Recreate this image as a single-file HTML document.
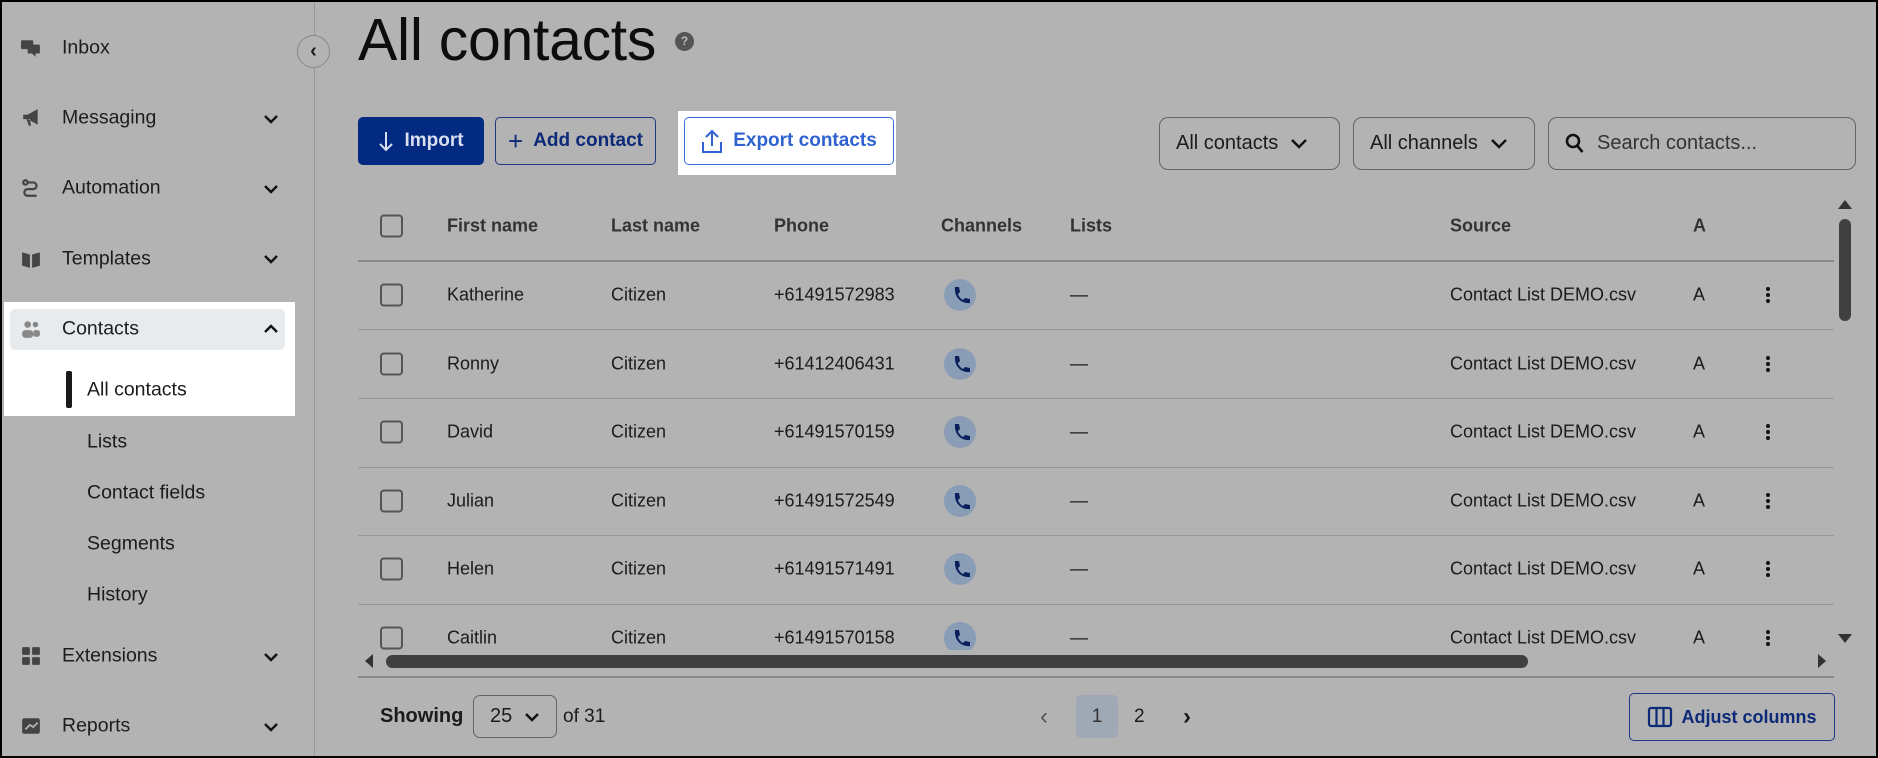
<!DOCTYPE html>
<html><head><meta charset="utf-8"><style>
*{margin:0;padding:0;box-sizing:border-box}
body{width:1878px;height:758px;background:#b3b3b3;font-family:"Liberation Sans",sans-serif;color:#1b1b1b;position:relative;overflow:hidden}
.a{position:absolute;white-space:nowrap}
.frame{position:absolute;left:0;top:0;width:1878px;height:758px;border:2px solid #000;pointer-events:none;z-index:10}
.nav{font-size:19.5px;color:#1d1d1d;transform:translateY(-50%)}
.ico{position:absolute;left:21px;width:20px;height:18px;transform:translateY(-50%)}
.chev{position:absolute;left:263px;transform:translateY(-50%)}
.sub{font-size:19.5px;left:87px;transform:translateY(-50%)}
.th{font-size:18px;font-weight:bold;color:#333;transform:translateY(-50%)}
.td{font-size:18px;color:#1b1b1b;transform:translateY(-50%)}
.cb{position:absolute;left:380px;width:23px;height:23px;border:2px solid #555;border-radius:4px;transform:translateY(-50%)}
.line{position:absolute;left:358px;width:1476px;height:1px;background:#999}
.ph{position:absolute;left:944px;width:32px;height:32px;border-radius:50%;background:#8a9db6;transform:translateY(-50%)}
.dots{position:absolute;left:1766px;width:4px;transform:translateY(-50%)}
.dots i{display:block;width:4px;height:4px;border-radius:50%;background:#111;margin:2px 0}
.btn{position:absolute;border-radius:5px;font-size:19px;font-weight:bold;display:flex;align-items:center;justify-content:center;gap:10px}
.flt{position:absolute;top:117px;height:53px;border:1.5px solid #5f666c;border-radius:9px;font-size:20px;display:flex;align-items:center;padding-left:16px;gap:12px}
</style></head><body>
<div class="frame"></div>
<div class="a" style="left:314px;top:0;width:1px;height:758px;background:#999"></div>
<div class="a" style="left:297px;top:35px;width:33px;height:33px;border-radius:50%;border:1px solid #888;background:#b3b3b3;text-align:center;line-height:30px;font-size:20px;font-weight:bold">‹</div>

<div class="a" style="left:4px;top:302px;width:291px;height:114px;background:#fff"></div>
<div class="a" style="left:10px;top:309px;width:275px;height:41px;background:#e8ebee;border-radius:5px"></div>
<div class="a" style="left:66px;top:371px;width:6px;height:37px;background:#1a1a1a;border-radius:2px"></div>

<svg class="ico" style="top:48px" viewBox="0 0 18 16"><rect x="0" y="1" width="11" height="8" rx="1" fill="#444"/><rect x="6" y="5" width="11" height="8" rx="1" fill="#444"/><path d="M13 13v3l-3-3z" fill="#444"/></svg>
<div class="a nav" style="left:62px;top:48px">Inbox</div>
<svg class="ico" style="top:118px" viewBox="0 0 18 16"><path d="M2 5h4l9-5v14l-9-5H2zM5 9l2 6h2l-1-6z" fill="#444"/></svg>
<div class="a nav" style="left:62px;top:118px">Messaging</div>
<svg class="ico" style="top:188px" viewBox="0 0 18 16" fill="none" stroke="#444" stroke-width="2"><circle cx="4" cy="3" r="2"/><path d="M6 3h5a3 3 0 010 6H6a3 3 0 000 6h8"/></svg>
<div class="a nav" style="left:62px;top:188px">Automation</div>
<svg class="ico" style="top:259px" viewBox="0 0 18 16"><path d="M1 2l7 2v12l-7-2zM17 2l-7 2v12l7-2z" fill="#444"/></svg>
<div class="a nav" style="left:62px;top:259px">Templates</div>
<svg class="ico" style="top:329px" viewBox="0 0 18 16"><circle cx="6" cy="4" r="3" fill="#888"/><circle cx="13" cy="4" r="2.5" fill="#888"/><rect x="1" y="9" width="10" height="7" rx="3" fill="#888"/><rect x="11" y="9" width="6" height="6" rx="2" fill="#888"/></svg>
<div class="a nav" style="left:62px;top:329px">Contacts</div>
<div class="a sub" style="top:390px">All contacts</div>
<div class="a sub" style="top:442px">Lists</div>
<div class="a sub" style="top:493px">Contact fields</div>
<div class="a sub" style="top:544px">Segments</div>
<div class="a sub" style="top:595px">History</div>
<svg class="ico" style="top:656px" viewBox="0 0 18 16"><rect x="1" y="0" width="7" height="7" rx="1" fill="#444"/><rect x="10" y="0" width="7" height="7" rx="1" fill="#444"/><rect x="1" y="9" width="7" height="7" rx="1" fill="#444"/><rect x="10" y="9" width="7" height="7" rx="1" fill="#444"/></svg>
<div class="a nav" style="left:62px;top:656px">Extensions</div>
<svg class="ico" style="top:726px" viewBox="0 0 18 16"><rect x="1" y="1" width="16" height="14" rx="2" fill="#444"/><path d="M4 11l4-4 3 2 4-4" stroke="#b3b3b3" stroke-width="1.6" fill="none"/></svg>
<div class="a nav" style="left:62px;top:726px">Reports</div>
<svg class="chev" style="top:119px" width="16" height="10" viewBox="0 0 16 10"><path d="M2 2l6 6 6-6" stroke="#111" stroke-width="2.4" fill="none"/></svg>
<svg class="chev" style="top:189px" width="16" height="10" viewBox="0 0 16 10"><path d="M2 2l6 6 6-6" stroke="#111" stroke-width="2.4" fill="none"/></svg>
<svg class="chev" style="top:259px" width="16" height="10" viewBox="0 0 16 10"><path d="M2 2l6 6 6-6" stroke="#111" stroke-width="2.4" fill="none"/></svg>
<svg class="chev" style="top:329px" width="16" height="10" viewBox="0 0 16 10"><path d="M2 8l6-6 6 6" stroke="#111" stroke-width="2.4" fill="none"/></svg>
<svg class="chev" style="top:657px" width="16" height="10" viewBox="0 0 16 10"><path d="M2 2l6 6 6-6" stroke="#111" stroke-width="2.4" fill="none"/></svg>
<svg class="chev" style="top:727px" width="16" height="10" viewBox="0 0 16 10"><path d="M2 2l6 6 6-6" stroke="#111" stroke-width="2.4" fill="none"/></svg>

<div class="a" style="left:358px;top:6px;font-size:59px;color:#0d0d0d;letter-spacing:-0.3px">All contacts</div>
<div class="a" style="left:675px;top:32px;width:19px;height:19px;border-radius:50%;background:#555;color:#bbb;font-size:12px;font-weight:bold;text-align:center;line-height:19px">?</div>

<div class="btn" style="left:358px;top:117px;width:126px;height:48px;background:#012a80;color:#d9def0"><svg width="16" height="22" viewBox="0 0 16 22" fill="none" stroke="#d9def0" stroke-width="2"><path d="M8 2v18M2 14l6 6 6-6"/></svg>Import</div>
<div class="btn" style="left:495px;top:117px;width:161px;height:48px;border:1.5px solid #1c3780;color:#0d2a78"><span style="font-size:26px;font-weight:normal">+</span>Add contact</div>
<div class="a" style="left:678px;top:111px;width:218px;height:64px;background:#fff"></div>
<div class="btn" style="left:684px;top:117px;width:210px;height:48px;border:1.5px solid #3c6fd6;color:#2f63d0;background:#fff"><svg width="22" height="26" viewBox="0 0 22 26" fill="none" stroke="#2f63d0" stroke-width="2"><path d="M11 18V3M5 9l6-6 6 6M2 14v10h18V14"/></svg>Export contacts</div>

<div class="flt" style="left:1159px;width:181px">All contacts <svg width="18" height="11" viewBox="0 0 18 11"><path d="M2 2l7 7 7-7" stroke="#111" stroke-width="2.4" fill="none"/></svg></div>
<div class="flt" style="left:1353px;width:182px">All channels <svg width="18" height="11" viewBox="0 0 18 11"><path d="M2 2l7 7 7-7" stroke="#111" stroke-width="2.4" fill="none"/></svg></div>
<div class="flt" style="left:1548px;width:308px;color:#333"><svg width="20" height="22" viewBox="0 0 20 22" fill="none" stroke="#111" stroke-width="2.6"><circle cx="8" cy="8" r="6"/><path d="M12.5 13l5 6"/></svg>Search contacts...</div>

<div class="cb" style="top:226px"></div>
<div class="a th" style="left:447px;top:226px">First name</div>
<div class="a th" style="left:611px;top:226px">Last name</div>
<div class="a th" style="left:774px;top:226px">Phone</div>
<div class="a th" style="left:941px;top:226px">Channels</div>
<div class="a th" style="left:1070px;top:226px">Lists</div>
<div class="a th" style="left:1450px;top:226px">Source</div>
<div class="a th" style="left:1693px;top:226px">A</div>
<div class="line" style="top:260px;height:2px;background:#8a8a8a"></div>

<div class="cb" style="top:295px"></div><div class="a td" style="left:447px;top:295px">Katherine</div><div class="a td" style="left:611px;top:295px">Citizen</div><div class="a td" style="left:774px;top:295px">+61491572983</div><div class="ph" style="top:295px"><svg width="32" height="32" viewBox="0 0 32 32"><path d="M11 8l4 0 1 5-2 2c1 3 3 5 5 6l2-2 5 1v4c-9 1-16-6-15-16z" fill="#0a1f5c"/></svg></div><div class="a td" style="left:1070px;top:295px">—</div><div class="a td" style="left:1450px;top:295px">Contact List DEMO.csv</div><div class="a td" style="left:1693px;top:295px">A</div><div class="dots" style="top:295px"><i></i><i></i><i></i></div>
<div class="line" style="top:329px"></div>
<div class="cb" style="top:364px"></div><div class="a td" style="left:447px;top:364px">Ronny</div><div class="a td" style="left:611px;top:364px">Citizen</div><div class="a td" style="left:774px;top:364px">+61412406431</div><div class="ph" style="top:364px"><svg width="32" height="32" viewBox="0 0 32 32"><path d="M11 8l4 0 1 5-2 2c1 3 3 5 5 6l2-2 5 1v4c-9 1-16-6-15-16z" fill="#0a1f5c"/></svg></div><div class="a td" style="left:1070px;top:364px">—</div><div class="a td" style="left:1450px;top:364px">Contact List DEMO.csv</div><div class="a td" style="left:1693px;top:364px">A</div><div class="dots" style="top:364px"><i></i><i></i><i></i></div>
<div class="line" style="top:398px"></div>
<div class="cb" style="top:432px"></div><div class="a td" style="left:447px;top:432px">David</div><div class="a td" style="left:611px;top:432px">Citizen</div><div class="a td" style="left:774px;top:432px">+61491570159</div><div class="ph" style="top:432px"><svg width="32" height="32" viewBox="0 0 32 32"><path d="M11 8l4 0 1 5-2 2c1 3 3 5 5 6l2-2 5 1v4c-9 1-16-6-15-16z" fill="#0a1f5c"/></svg></div><div class="a td" style="left:1070px;top:432px">—</div><div class="a td" style="left:1450px;top:432px">Contact List DEMO.csv</div><div class="a td" style="left:1693px;top:432px">A</div><div class="dots" style="top:432px"><i></i><i></i><i></i></div>
<div class="line" style="top:467px"></div>
<div class="cb" style="top:501px"></div><div class="a td" style="left:447px;top:501px">Julian</div><div class="a td" style="left:611px;top:501px">Citizen</div><div class="a td" style="left:774px;top:501px">+61491572549</div><div class="ph" style="top:501px"><svg width="32" height="32" viewBox="0 0 32 32"><path d="M11 8l4 0 1 5-2 2c1 3 3 5 5 6l2-2 5 1v4c-9 1-16-6-15-16z" fill="#0a1f5c"/></svg></div><div class="a td" style="left:1070px;top:501px">—</div><div class="a td" style="left:1450px;top:501px">Contact List DEMO.csv</div><div class="a td" style="left:1693px;top:501px">A</div><div class="dots" style="top:501px"><i></i><i></i><i></i></div>
<div class="line" style="top:535px"></div>
<div class="cb" style="top:569px"></div><div class="a td" style="left:447px;top:569px">Helen</div><div class="a td" style="left:611px;top:569px">Citizen</div><div class="a td" style="left:774px;top:569px">+61491571491</div><div class="ph" style="top:569px"><svg width="32" height="32" viewBox="0 0 32 32"><path d="M11 8l4 0 1 5-2 2c1 3 3 5 5 6l2-2 5 1v4c-9 1-16-6-15-16z" fill="#0a1f5c"/></svg></div><div class="a td" style="left:1070px;top:569px">—</div><div class="a td" style="left:1450px;top:569px">Contact List DEMO.csv</div><div class="a td" style="left:1693px;top:569px">A</div><div class="dots" style="top:569px"><i></i><i></i><i></i></div>
<div class="line" style="top:604px"></div>
<div class="cb" style="top:638px"></div><div class="a td" style="left:447px;top:638px">Caitlin</div><div class="a td" style="left:611px;top:638px">Citizen</div><div class="a td" style="left:774px;top:638px">+61491570158</div><div class="ph" style="top:638px"><svg width="32" height="32" viewBox="0 0 32 32"><path d="M11 8l4 0 1 5-2 2c1 3 3 5 5 6l2-2 5 1v4c-9 1-16-6-15-16z" fill="#0a1f5c"/></svg></div><div class="a td" style="left:1070px;top:638px">—</div><div class="a td" style="left:1450px;top:638px">Contact List DEMO.csv</div><div class="a td" style="left:1693px;top:638px">A</div><div class="dots" style="top:638px"><i></i><i></i><i></i></div>

<div class="a" style="left:358px;top:650px;width:1476px;height:24px;background:#b3b3b3"></div>
<div class="a" style="left:386px;top:655px;width:1142px;height:13px;border-radius:7px;background:#404040"></div>
<div class="a" style="left:365px;top:654px;width:0;height:0;border-top:7px solid transparent;border-bottom:7px solid transparent;border-right:8px solid #333"></div>
<div class="a" style="left:1818px;top:654px;width:0;height:0;border-top:7px solid transparent;border-bottom:7px solid transparent;border-left:8px solid #333"></div>
<div class="a" style="left:358px;top:676px;width:1476px;height:2px;background:#8a8a8a"></div>
<div class="a" style="left:1838px;top:200px;width:0;height:0;border-left:7px solid transparent;border-right:7px solid transparent;border-bottom:9px solid #333"></div>
<div class="a" style="left:1839px;top:219px;width:12px;height:102px;border-radius:6px;background:#404040"></div>
<div class="a" style="left:1838px;top:634px;width:0;height:0;border-left:7px solid transparent;border-right:7px solid transparent;border-top:9px solid #333"></div>

<div class="a" style="left:380px;top:705px;font-size:20px;font-weight:bold">Showing</div>
<div class="a" style="left:473px;top:695px;width:84px;height:43px;border:1.5px solid #5f666c;border-radius:7px;font-size:20px;padding:9px 0 0 16px">25 <svg width="16" height="10" viewBox="0 0 16 10" style="margin-left:6px"><path d="M2 2l6 6 6-6" stroke="#111" stroke-width="2.4" fill="none"/></svg></div>
<div class="a" style="left:563px;top:706px;font-size:19px">of 31</div>
<div class="a" style="left:1040px;top:703px;font-size:24px;color:#555">‹</div>
<div class="a" style="left:1076px;top:695px;width:42px;height:43px;border-radius:5px;background:#9fa8b5;font-size:19px;text-align:center;line-height:43px;color:#333">1</div>
<div class="a" style="left:1134px;top:706px;font-size:19px">2</div>
<div class="a" style="left:1183px;top:703px;font-size:24px;font-weight:bold">›</div>
<div class="btn" style="left:1629px;top:693px;width:206px;height:48px;border:1.5px solid #1c3780;color:#0d2a78;font-size:18px;gap:8px"><svg width="26" height="22" viewBox="0 0 26 22" fill="none" stroke="#0d2a78" stroke-width="2.2"><rect x="2" y="2" width="22" height="18" rx="2"/><path d="M9.5 2v18M16.5 2v18"/></svg>Adjust columns</div>
</body></html>
